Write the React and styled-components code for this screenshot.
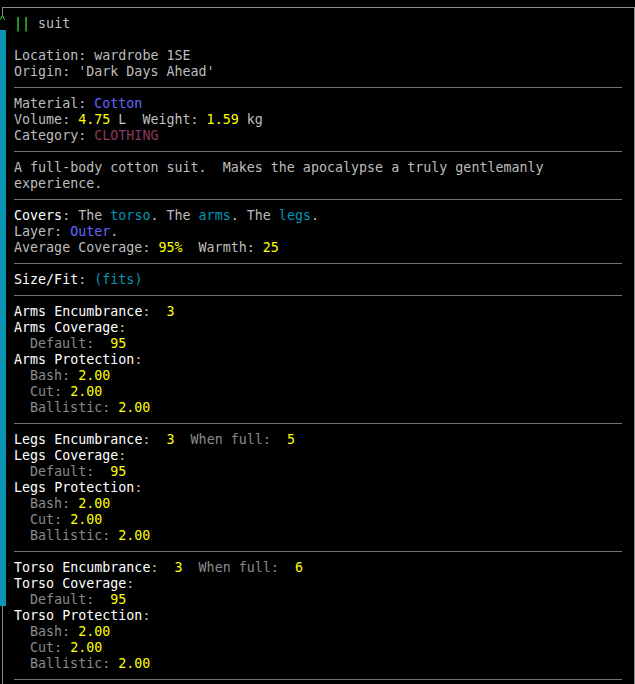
import React from 'react';
import styled, { createGlobalStyle } from 'styled-components';

const GlobalStyle = createGlobalStyle`
  html, body {
    margin: 0;
    padding: 0;
    background: #000;
  }
`;

const tones = {
  text: '#bdbdbd',
  white: '#ffffff',
  dim: '#8a8a8a',
  blue: '#6464ff',
  cyan: '#0096b4',
  yellow: '#ffff00',
  magenta: '#8b3a62',
  green: '#3ee03e'
};

const Screen = styled.div`
  display: flex;
  width: 635px;
  height: 684px;
  padding-top: 7px;
  box-sizing: border-box;
  background: #000;
  overflow: hidden;
  font-family: 'DejaVu Sans Mono', 'Liberation Mono', monospace;
  font-size: 13.33px;
  line-height: 16px;
  color: ${tones.text};
`;

const Gutter = styled.div`
  display: flex;
  flex-direction: column;
  width: 14px;
  flex-shrink: 0;
`;

const Corner = styled.div`
  margin-left: 2px;
  height: 7px;
  border-top: 1px solid #8c8c8c;
  border-left: 1px solid #8c8c8c;
`;

const Caret = styled.svg`
  display: block;
  margin-top: 0;
  width: 5px;
  height: 5px;
`;

const Thumb = styled.div`
  margin-top: 10px;
  width: 6px;
  height: 576px;
  background: #0a96b4;
`;

const Track = styled.div`
  flex: 1;
  margin-left: 2px;
  width: 1px;
  background: #8c8c8c;
`;

const Panel = styled.div`
  flex: 1;
  padding-top: 6px;
  border-top: 1px solid #8c8c8c;
  border-right: 1px solid #8c8c8c;
  white-space: pre;
`;

const Row = styled.div`
  height: 16px;
  line-height: 19px;
  padding-left: ${p => (p.$indent || 0) * 8}px;
`;

const Blank = styled.div`
  height: 16px;
`;

const Rule = styled.div`
  width: 608px;
  height: 1px;
  margin: 9px 0 6px;
  background: #727272;
`;

const C = styled.span`
  color: ${p => tones[p.$tone] || tones.text};
`;

const parts = [
  { name: 'Arms', full: null },
  { name: 'Legs', full: 5 },
  { name: 'Torso', full: 6 }
];

const Part = ({ name, full }) => (
  <>
    <Row>
      <C $tone="white">{name} Encumbrance</C>:  <C $tone="yellow">3</C>
      {full && (
        <>
          {'  '}
          <C $tone="dim">When full:</C>  <C $tone="yellow">{full}</C>
        </>
      )}
    </Row>
    <Row>
      <C $tone="white">{name} Coverage</C>:
    </Row>
    <Row $indent={2}>
      <C $tone="dim">Default:</C>  <C $tone="yellow">95</C>
    </Row>
    <Row>
      <C $tone="white">{name} Protection</C>:
    </Row>
    <Row $indent={2}>
      <C $tone="dim">Bash:</C> <C $tone="yellow">2.00</C>
    </Row>
    <Row $indent={2}>
      <C $tone="dim">Cut:</C> <C $tone="yellow">2.00</C>
    </Row>
    <Row $indent={2}>
      <C $tone="dim">Ballistic:</C> <C $tone="yellow">2.00</C>
    </Row>
    <Rule />
  </>
);

export default function App() {
  return (
    <>
      <GlobalStyle />
      <Screen>
        <Gutter>
          <Corner />
          <Caret viewBox="0 0 5 5">
            <polyline points="0.5,4.5 2.5,0.5 4.5,4.5" fill="none" stroke={tones.green} strokeWidth="1" />
          </Caret>
          <Thumb />
          <Track />
        </Gutter>
        <Panel>
          <Row>
            <C $tone="green">||</C> suit
          </Row>
          <Blank />
          <Row>Location: wardrobe 1SE</Row>
          <Row>Origin: 'Dark Days Ahead'</Row>
          <Rule />
          <Row>
            Material: <C $tone="blue">Cotton</C>
          </Row>
          <Row>
            Volume: <C $tone="yellow">4.75</C> L  Weight: <C $tone="yellow">1.59</C> kg
          </Row>
          <Row>
            Category: <C $tone="magenta">CLOTHING</C>
          </Row>
          <Rule />
          <Row>A full-body cotton suit.  Makes the apocalypse a truly gentlemanly</Row>
          <Row>experience.</Row>
          <Rule />
          <Row>
            <C $tone="white">Covers</C>: The <C $tone="cyan">torso</C>. The <C $tone="cyan">arms</C>. The{' '}
            <C $tone="cyan">legs</C>.
          </Row>
          <Row>
            Layer: <C $tone="blue">Outer</C>.
          </Row>
          <Row>
            Average Coverage: <C $tone="yellow">95%</C>  Warmth: <C $tone="yellow">25</C>
          </Row>
          <Rule />
          <Row>
            <C $tone="white">Size/Fit</C>: <C $tone="cyan">(fits)</C>
          </Row>
          <Rule />
          {parts.map(p => (
            <Part key={p.name} name={p.name} full={p.full} />
          ))}
        </Panel>
      </Screen>
    </>
  );
}
